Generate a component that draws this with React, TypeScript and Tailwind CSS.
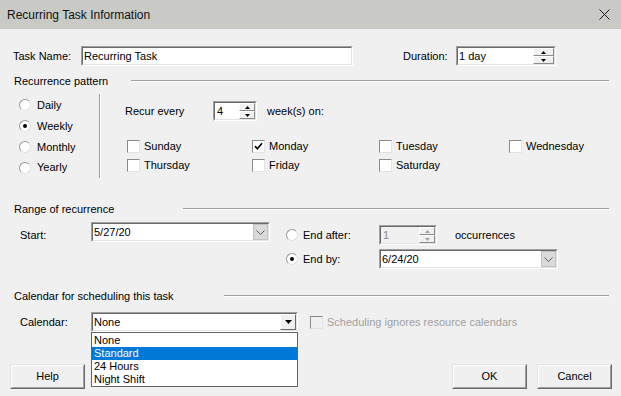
import type { ReactNode } from "react";

function Sunken({
  className = "",
  inner = "bg-white",
  children,
}: {
  className?: string;
  inner?: string;
  children?: ReactNode;
}) {
  return (
    <div
      className={`border border-t-[#a0a0a0] border-l-[#a0a0a0] border-b-white border-r-white ${className}`}
    >
      <div
        className={`h-full w-full flex items-center border border-t-[#696969] border-l-[#696969] border-b-[#e3e3e3] border-r-[#e3e3e3] ${inner}`}
      >
        {children}
      </div>
    </div>
  );
}

function Arrow({ up, color = "#000" }: { up?: boolean; color?: string }) {
  return (
    <svg width="5" height="3" viewBox="0 0 5 3">
      <polygon points={up ? "0,3 2.5,0 5,3" : "0,0 2.5,3 5,0"} fill={color} />
    </svg>
  );
}

function SpinButtons({ w, disabled }: { w: string; disabled?: boolean }) {
  const c = disabled ? "#a0a0a0" : "#000";
  return (
    <div className={`flex flex-col h-full shrink-0 ${w}`}>
      <div className="flex-1 flex items-center justify-center bg-[#f0f0f0] border border-t-white border-l-white border-b-[#8a8a8a] border-r-[#8a8a8a]">
        <Arrow up color={c} />
      </div>
      <div className="flex-1 flex items-center justify-center bg-[#f0f0f0] border border-t-white border-l-white border-b-[#8a8a8a] border-r-[#8a8a8a]">
        <Arrow color={c} />
      </div>
    </div>
  );
}

function ChevronButton() {
  return (
    <div className="w-[15px] h-full shrink-0 flex items-center justify-center bg-[#dadada] border border-[#c2c2c2]">
      <svg width="9" height="5" viewBox="0 0 9 5">
        <path d="M0.5 0.5 L4.5 4.5 L8.5 0.5" stroke="#5a5a5a" fill="none" strokeWidth="1" />
      </svg>
    </div>
  );
}

function Radio({ checked }: { checked?: boolean }) {
  return (
    <span className="w-[12px] h-[12px] shrink-0 rounded-full bg-white border border-t-[#9a9a9a] border-l-[#9a9a9a] border-b-[#e0e0e0] border-r-[#e0e0e0] flex items-center justify-center">
      {checked && <span className="w-[4px] h-[4px] rounded-full bg-black" />}
    </span>
  );
}

function Check({ checked, disabled }: { checked?: boolean; disabled?: boolean }) {
  return (
    <span
      className={`w-[13px] h-[13px] shrink-0 border border-t-[#8a8a8a] border-l-[#8a8a8a] border-b-[#e3e3e3] border-r-[#e3e3e3] flex items-center justify-center ${
        disabled ? "bg-[#f0f0f0]" : "bg-white"
      }`}
    >
      {checked && (
        <svg width="9" height="9" viewBox="0 0 9 9">
          <path d="M1 4.2 L3.4 6.8 L8 1.2" stroke="#000" strokeWidth="1.7" fill="none" />
        </svg>
      )}
    </span>
  );
}

function Header({ label, w, className = "" }: { label: string; w: string; className?: string }) {
  return (
    <div className={`flex items-center h-[14px] ${className}`}>
      <span className={`pl-[1px] shrink-0 ${w}`}>{label}</span>
      <div className="flex-1 h-[2px] border-t border-t-[#a0a0a0] border-b border-b-white" />
    </div>
  );
}

function Day({ label, checked, w }: { label: string; checked?: boolean; w: string }) {
  return (
    <div className={`flex items-center ${w}`}>
      <Check checked={checked} />
      <span className="ml-[4px]">{label}</span>
    </div>
  );
}

function Button({ label }: { label: string }) {
  return (
    <div className="w-[75px] h-[25px] border border-t-[#e3e3e3] border-l-[#e3e3e3] border-b-[#696969] border-r-[#696969]">
      <div className="h-full w-full flex items-center justify-center bg-[#f0f0f0] border border-t-white border-l-white border-b-[#a0a0a0] border-r-[#a0a0a0]">
        {label}
      </div>
    </div>
  );
}

export default function App() {
  return (
    <div className="w-[621px] h-[396px] bg-[#f0f0f0] flex flex-col overflow-hidden font-['Liberation_Sans',Arial,sans-serif] text-[11px] text-black">
      <div className="h-[29px] shrink-0 bg-[#c9cac6] flex items-center justify-between pl-[7px] pr-[11px]">
        <span className="text-[12px] text-[#111]">Recurring Task Information</span>
        <svg width="11" height="11" viewBox="0 0 11 11">
          <path d="M0.5 0.5 L10.5 10.5 M10.5 0.5 L0.5 10.5" stroke="#1a1a1a" strokeWidth="1" />
        </svg>
      </div>

      <div className="flex flex-col pl-[13px] pr-[12px]">
        <div className="mt-[17px] h-[20px] flex items-center">
          <span className="w-[68px] shrink-0">Task Name:</span>
          <Sunken className="w-[272px] h-[20px]">
            <span className="pl-[1px]">Recurring Task</span>
          </Sunken>
          <span className="ml-[50px] w-[53px] shrink-0">Duration:</span>
          <Sunken className="w-[100px] h-[20px]">
            <span className="pl-[1px] flex-1">1 day</span>
            <SpinButtons w="w-[21px]" />
          </Sunken>
        </div>

        <Header label="Recurrence pattern" w="w-[118px]" className="mt-[8px]" />

        <div className="mt-[6px] h-[84px] flex">
          <div className="w-[86px] shrink-0 flex flex-col pt-[1px] pl-[6px]">
            {[
              ["Daily", false],
              ["Weekly", true],
              ["Monthly", false],
              ["Yearly", false],
            ].map(([l, c]) => (
              <div key={l as string} className="h-[21px] flex items-center">
                <Radio checked={c as boolean} />
                <span className="ml-[6px]">{l as string}</span>
              </div>
            ))}
          </div>
          <div className="w-[2px] h-full border-l border-l-[#a0a0a0] border-r border-r-white" />
          <div className="flex flex-col pl-[24px]">
            <div className="mt-[7px] h-[20px] flex items-center">
              <span className="w-[88px] shrink-0">Recur every</span>
              <Sunken className="w-[44px] h-[20px]">
                <span className="pl-[2px] flex-1">4</span>
                <SpinButtons w="w-[16px]" />
              </Sunken>
              <span className="ml-[10px]">week(s) on:</span>
            </div>
            <div className="mt-[16px] pl-[2px] h-[19px] flex items-center">
              <Day label="Sunday" w="w-[125px]" />
              <Day label="Monday" checked w="w-[127px]" />
              <Day label="Tuesday" w="w-[130px]" />
              <Day label="Wednesday" w="w-[90px]" />
            </div>
            <div className="pl-[2px] h-[19px] flex items-center">
              <Day label="Thursday" w="w-[125px]" />
              <Day label="Friday" w="w-[127px]" />
              <Day label="Saturday" w="w-[130px]" />
            </div>
          </div>
        </div>

        <Header label="Range of recurrence" w="w-[170px]" className="mt-[24px]" />

        <div className="mt-[6px] flex items-start">
          <span className="pl-[7px] w-[78px] shrink-0 h-[20px] mt-[3px] flex items-center">Start:</span>
          <Sunken className="w-[179px] h-[20px]">
            <span className="pl-[1px] flex-1">5/27/20</span>
            <ChevronButton />
          </Sunken>
          <div className="ml-[16px] pt-[3px] flex flex-col gap-[4px]">
            <div className="h-[20px] flex items-center">
              <Radio />
              <span className="ml-[5px] w-[76px] shrink-0">End after:</span>
              <Sunken className="w-[58px] h-[20px]" inner="bg-[#f0f0f0]">
                <span className="pl-[2px] flex-1 text-[#8a8a8a]">1</span>
                <SpinButtons w="w-[16px]" disabled />
              </Sunken>
              <span className="ml-[18px]">occurrences</span>
            </div>
            <div className="h-[20px] flex items-center">
              <Radio checked />
              <span className="ml-[5px] w-[76px] shrink-0">End by:</span>
              <Sunken className="w-[179px] h-[20px]">
                <span className="pl-[1px] flex-1">6/24/20</span>
                <ChevronButton />
              </Sunken>
            </div>
          </div>
        </div>

        <Header label="Calendar for scheduling this task" w="w-[211px]" className="mt-[20px]" />

        <div className="mt-[9px] h-[20px] flex items-center">
          <span className="pl-[7px] w-[78px] shrink-0">Calendar:</span>
          <div className="relative w-[207px] h-[20px] shrink-0">
            <Sunken className="w-full h-full">
              <span className="pl-[1px] flex-1">None</span>
              <div className="w-[16px] h-full shrink-0 border border-t-white border-l-white border-b-[#696969] border-r-[#696969] bg-[#f0f0f0] flex items-center justify-center">
                <svg width="7" height="4" viewBox="0 0 7 4">
                  <polygon points="0,0 7,0 3.5,4" fill="#000" />
                </svg>
              </div>
            </Sunken>
            <div className="absolute left-0 top-full z-10 w-full h-[55px] bg-white border border-[#646464] flex flex-col pt-[1px]">
              <div className="h-[13px] flex items-center pl-[2px]">None</div>
              <div className="h-[13px] flex items-center pl-[2px] bg-[#0078d7] text-white">Standard</div>
              <div className="h-[13px] flex items-center pl-[2px]">24 Hours</div>
              <div className="h-[13px] flex items-center pl-[2px]">Night Shift</div>
            </div>
          </div>
          <span className="ml-[12px]">
            <Check disabled />
          </span>
          <span className="ml-[4px] text-[#a0a0a0]">Scheduling ignores resource calendars</span>
        </div>

        <div className="mt-[32px] -ml-[3px] -mr-[3px] flex">
          <Button label="Help" />
          <div className="flex-1" />
          <Button label="OK" />
          <div className="ml-[10px]">
            <Button label="Cancel" />
          </div>
        </div>
      </div>
    </div>
  );
}
